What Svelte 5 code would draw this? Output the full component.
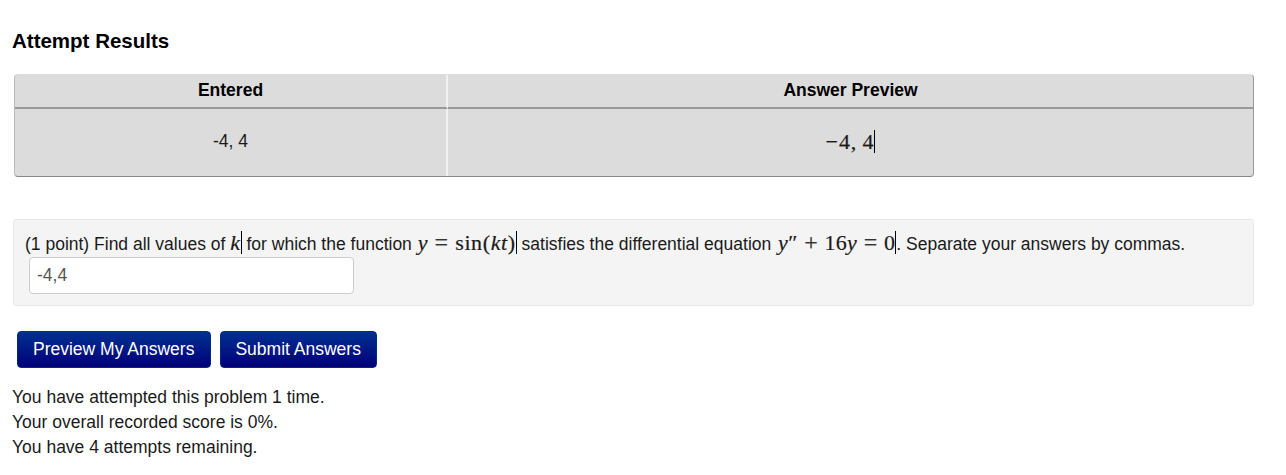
<script lang="ts">
	const columns = ['Entered', 'Answer Preview'];
	const attemptLines = [
		'You have attempted this problem 1 time.',
		'Your overall recorded score is 0%.',
		'You have 4 attempts remaining.'
	];
	let answer = $state('-4,4');
</script>

<div class="page">
	<h2>Attempt Results</h2>

	<table class="results">
		<thead>
			<tr>
				{#each columns as col}
					<th>{col}</th>
				{/each}
			</tr>
		</thead>
		<tbody>
			<tr>
				<td>-4, 4</td>
				<td><span class="math preview bar">−4,&#8201;4</span></td>
			</tr>
		</tbody>
	</table>

	<div class="problem">
		<div class="statement">
			(1 point) Find all values of <span class="math bar"><i>k</i></span> for which the function
			<span class="math bar shift-1"><i>y</i><span class="op">=</span>sin(<i>kt</i>)</span> satisfies the differential equation
			<span class="math bar shift-2"><i>y</i>″<span class="op">+</span>16<i>y</i><span class="op">=</span>0</span>. Separate your answers by commas.
		</div>
		<input class="answer" type="text" bind:value={answer} />
	</div>

	<div class="actions">
		<button type="button">Preview My Answers</button>
		<button type="button">Submit Answers</button>
	</div>

	<div class="score">
		{#each attemptLines as line}
			<div>{line}</div>
		{/each}
	</div>
</div>

<style>
	:global(body) {
		margin: 0;
		background: #fff;
	}

	.page {
		padding: 30px 32px 0 12px;
		font-family: "Liberation Sans", Arial, sans-serif;
		font-size: 17.5px;
		color: #1a1a1a;
	}

	h2 {
		margin: 0 0 22px;
		font-size: 20.5px;
		line-height: 22px;
		font-weight: bold;
		color: #000;
	}

	.results {
		width: 1240px;
		margin-left: 2px;
		border-collapse: separate;
		border-spacing: 0;
		table-layout: fixed;
		background: #dcdcdc;
		border: 1px solid #bbb;
		border-top-color: #ddd;
		border-bottom-color: #888;
		border-right-color: #999;
		border-radius: 4px;
		font-size: 17.5px;
	}

	th:first-child,
	td:first-child {
		width: 431px;
		border-right: 2px solid #f2f2f2;
	}

	th {
		height: 30px;
		padding: 0 0 2px;
		font-weight: bold;
		color: #000;
		border-bottom: 2px solid #999;
		text-align: center;
	}

	td {
		height: 65px;
		padding: 0 0 2px;
		text-align: center;
	}

	.math {
		font-family: "Liberation Serif", "DejaVu Serif", serif;
		font-size: 22px;
		letter-spacing: 0.6px;
		-webkit-text-stroke: 0.2px #1a1a1a;
	}

	.preview {
		font-size: 22px;
		letter-spacing: 0.9px;
	}

	.bar {
		display: inline-block;
		line-height: 23px;
		border-right: 1px solid #000;
	}

	.shift-1 {
		margin-left: 1px;
	}

	.shift-2 {
		margin-left: 2px;
		letter-spacing: 0.3px;
	}

	.op {
		margin: 0 6.5px;
		font-size: 24px;
		line-height: 20px;
		color: #333;
	}

	.problem {
		width: 1218px;
		margin: 42px 0 0 1px;
		padding: 11px 10px 11px 11px;
		background: #f4f4f4;
		border: 1px solid #e8e8e8;
		border-radius: 3px;
	}

	.statement {
		line-height: 26px;
	}

	.answer {
		display: block;
		box-sizing: border-box;
		width: 325px;
		height: 37px;
		margin: 0 0 0 4px;
		padding: 0 7px;
		background: #fff;
		border: 1px solid #ccc;
		border-radius: 4px;
		font: inherit;
		color: #555;
	}

	.actions {
		display: flex;
		gap: 9px;
		margin: 25px 0 0 5px;
	}

	button {
		height: 37px;
		padding: 0 15px;
		background: linear-gradient(#00308f, #00007a);
		border: 1px solid #002a80;
		border-radius: 4px;
		font: inherit;
		color: #fff;
	}

	button:first-child {
		padding-right: 16px;
	}

	button:last-child {
		padding-left: 14px;
	}

	.score {
		margin-top: 17px;
		line-height: 25px;
	}
</style>
